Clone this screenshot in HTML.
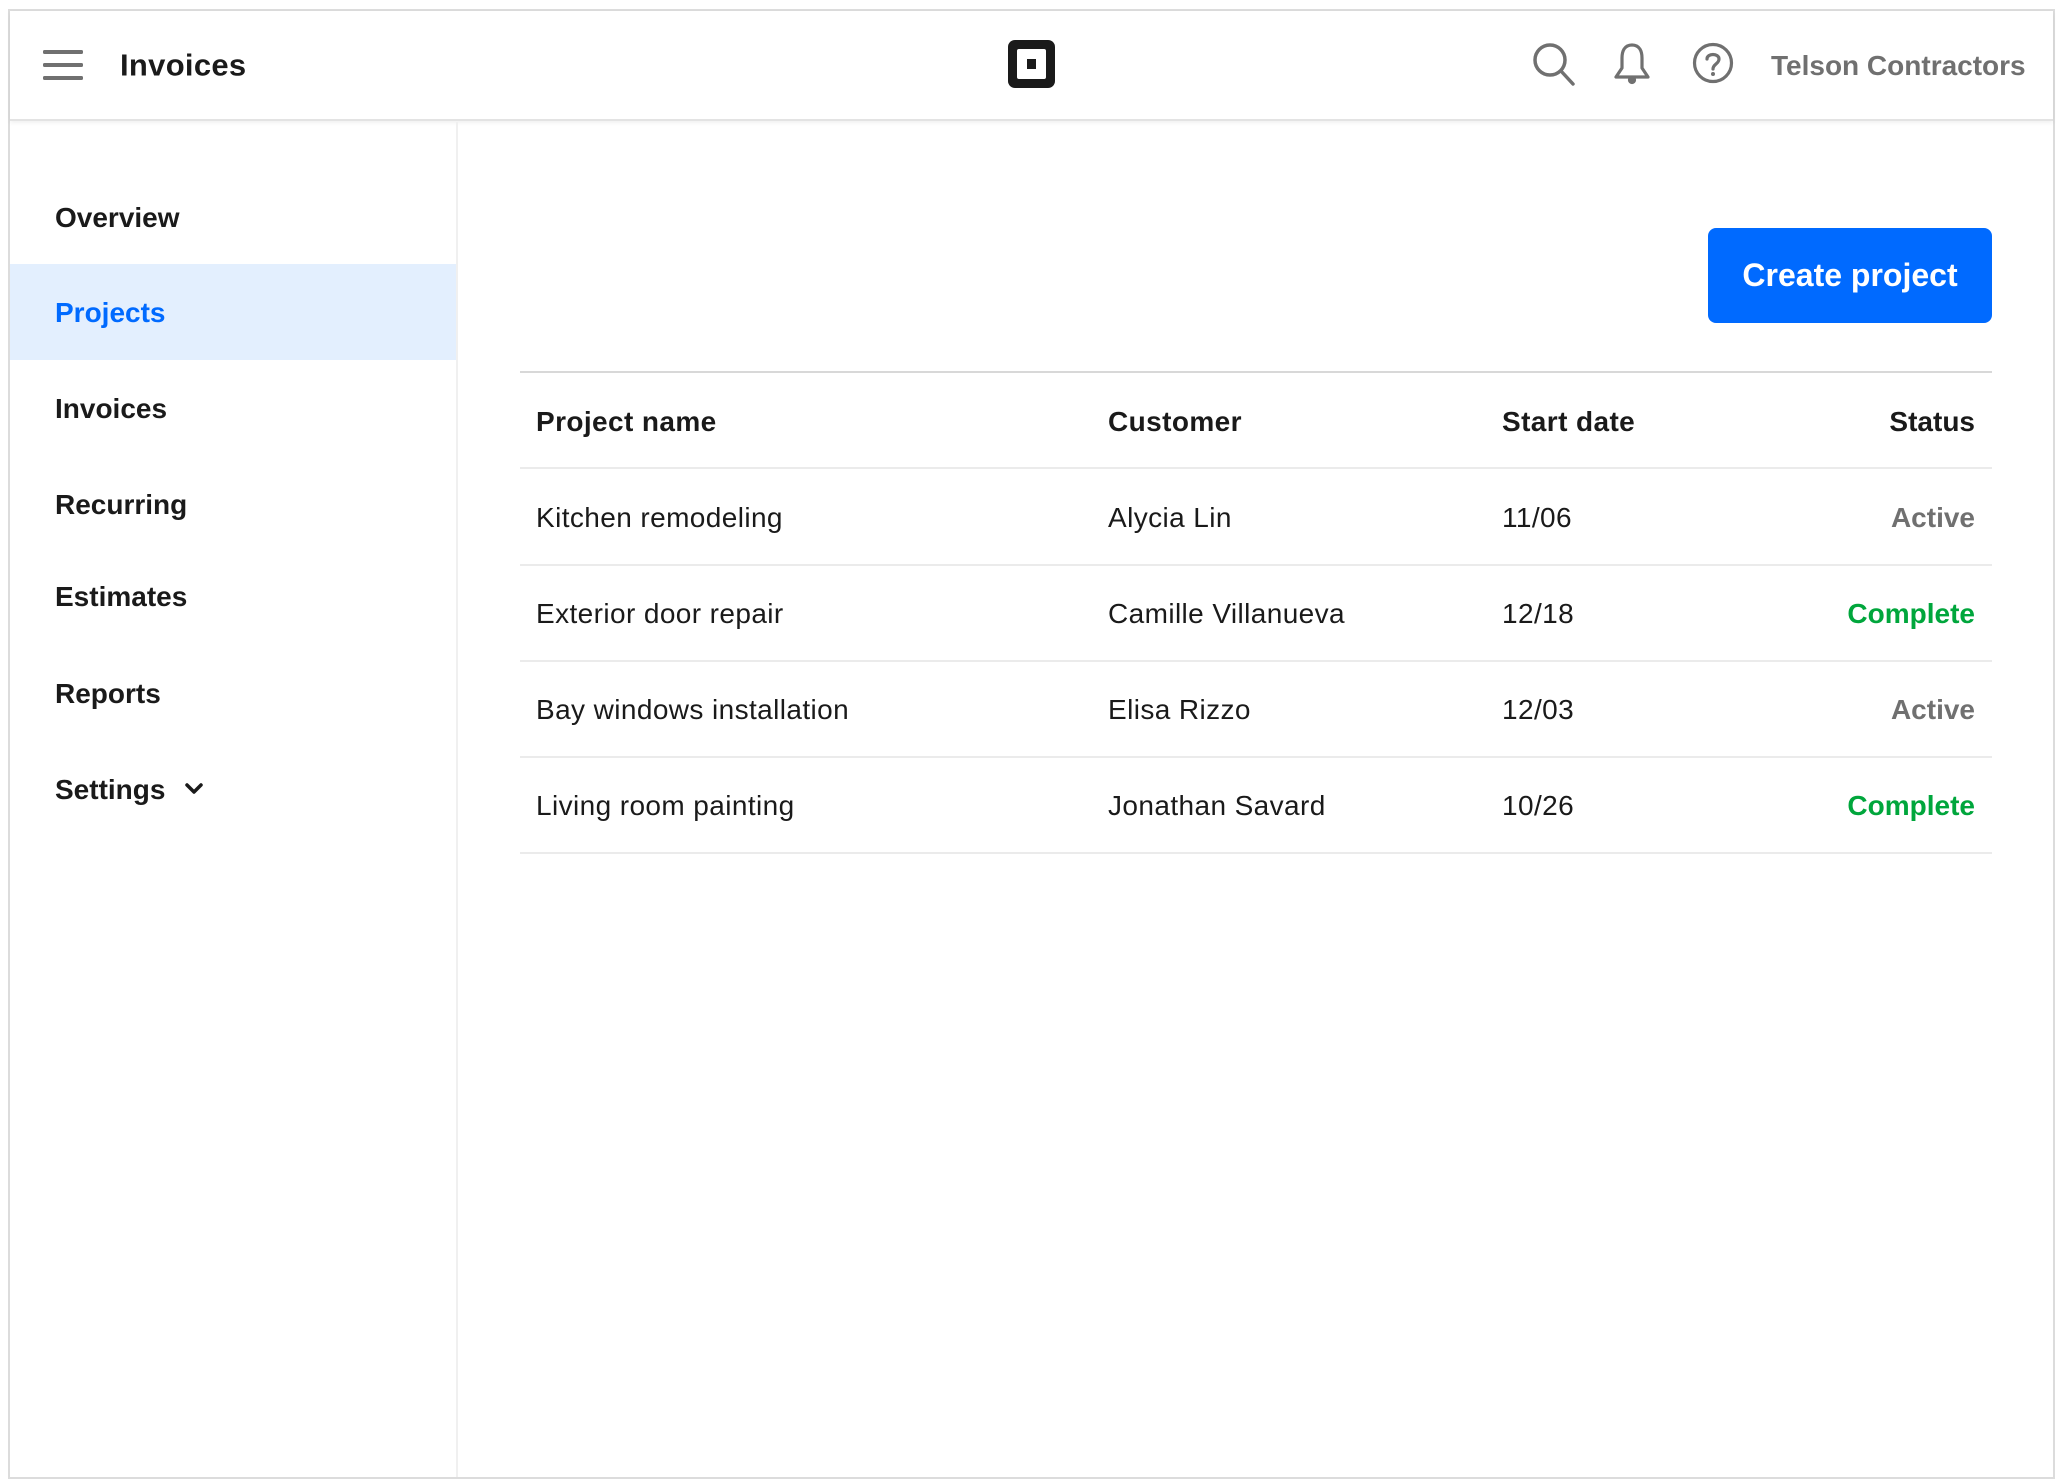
<!DOCTYPE html>
<html><head><meta charset="utf-8"><style>
*{margin:0;padding:0;box-sizing:border-box}
body{width:2064px;height:1480px;background:#fff;font-family:"Liberation Sans",sans-serif;position:relative;overflow:hidden;color:#1a1a1a}
.frame{position:absolute;left:8px;top:9px;width:2047px;height:1470px;border:2px solid #dcdcdc}
.hdr{position:absolute;left:10px;top:11px;width:2043px;height:110px;border-bottom:2px solid #e3e3e3;box-shadow:0 2px 4px rgba(0,0,0,.06)}
.side{position:absolute;left:456px;top:122px;width:2px;height:1355px;background:#f0f0f0}
.t{position:absolute;white-space:nowrap;line-height:1}
.nav{font-size:28px;font-weight:bold;left:55px;color:#1a1a1a;transform:translateY(-50%)}
.sel{position:absolute;left:10px;top:264px;width:446px;height:96px;background:#e3effe}
.line{position:absolute;left:520px;width:1472px;height:2px;background:#ebebeb}
.cell{font-size:28px;letter-spacing:0.4px;transform:translateY(-50%)}
.st{font-weight:bold;right:89px;letter-spacing:0}
.g{color:#00a63c}.a{color:#707070}
</style></head><body>
<div class="frame"></div>
<div class="hdr"></div>
<svg style="position:absolute;left:43px;top:50px" width="42" height="30"><g fill="#707070"><rect x="0" y="0" width="40" height="4" rx="1.5"/><rect x="0" y="13" width="40" height="4" rx="1.5"/><rect x="0" y="26" width="40" height="4" rx="1.5"/></g></svg>
<div class="t" style="left:120px;top:65px;font-size:31px;font-weight:bold;letter-spacing:0.3px;transform:translateY(-50%)">Invoices</div>
<svg style="position:absolute;left:1008px;top:40px" width="48" height="48"><rect x="0" y="0" width="47" height="48" rx="7" fill="#1a1a1a"/><rect x="9" y="9" width="29" height="30" rx="2" fill="#fff"/><rect x="19" y="19" width="9" height="10" fill="#1a1a1a"/></svg>
<svg style="position:absolute;left:1532px;top:42px" width="44" height="44" fill="none" stroke="#707070" stroke-width="3.5"><circle cx="18" cy="18" r="15"/><line x1="29" y1="29" x2="41" y2="42" stroke-linecap="round"/></svg>
<svg style="position:absolute;left:1612px;top:42px" width="44" height="44" fill="none" stroke="#707070" stroke-width="3.2" stroke-linejoin="round"><path d="M20 3 C12 3 10 10 10 16 V26 L4 35 H36 L30 26 V16 C30 10 28 3 20 3Z"/><circle cx="20" cy="38" r="2.5" fill="#707070"/></svg>
<svg style="position:absolute;left:1692px;top:42px" width="44" height="44" fill="none" stroke="#707070" stroke-width="3.2"><circle cx="21" cy="21" r="18.5"/><path d="M15 17 C15 11 27 11 27 17 C27 22 21 22 21 27" stroke-linecap="round"/><circle cx="21" cy="32" r="2" fill="#707070" stroke="none"/></svg>
<div class="t" style="left:1771px;top:66px;font-size:28px;font-weight:bold;color:#707070;transform:translateY(-50%)">Telson Contractors</div>
<div class="side"></div>
<div class="sel"></div>
<div class="t nav" style="top:218px">Overview</div>
<div class="t nav" style="top:313px;color:#006aff">Projects</div>
<div class="t nav" style="top:409px">Invoices</div>
<div class="t nav" style="top:505px">Recurring</div>
<div class="t nav" style="top:597px">Estimates</div>
<div class="t nav" style="top:694px">Reports</div>
<div class="t nav" style="top:790px">Settings</div>
<svg style="position:absolute;left:184px;top:782px" width="20" height="14" fill="none" stroke="#1a1a1a" stroke-width="3.5" stroke-linecap="round" stroke-linejoin="round"><path d="M3 3 L10 10 L17 3"/></svg>
<div style="position:absolute;left:1708px;top:228px;width:284px;height:95px;background:#006aff;border-radius:8px;color:#fff;font-size:32px;font-weight:bold;display:flex;align-items:center;justify-content:center">Create project</div>
<div class="line" style="top:371px;background:#d8d8d8"></div>
<div class="line" style="top:467px"></div>
<div class="line" style="top:564px"></div>
<div class="line" style="top:660px"></div>
<div class="line" style="top:756px"></div>
<div class="line" style="top:852px"></div>
<div class="t cell" style="left:536px;top:422px;font-weight:bold">Project name</div>
<div class="t cell" style="left:1108px;top:422px;font-weight:bold">Customer</div>
<div class="t cell" style="left:1502px;top:422px;font-weight:bold">Start date</div>
<div class="t cell st" style="top:422px">Status</div>

<div class="t cell" style="left:536px;top:518px">Kitchen remodeling</div>
<div class="t cell" style="left:1108px;top:518px">Alycia Lin</div>
<div class="t cell" style="left:1502px;top:518px">11/06</div>
<div class="t cell st a" style="top:518px">Active</div>

<div class="t cell" style="left:536px;top:614px">Exterior door repair</div>
<div class="t cell" style="left:1108px;top:614px">Camille Villanueva</div>
<div class="t cell" style="left:1502px;top:614px">12/18</div>
<div class="t cell st g" style="top:614px">Complete</div>

<div class="t cell" style="left:536px;top:710px">Bay windows installation</div>
<div class="t cell" style="left:1108px;top:710px">Elisa Rizzo</div>
<div class="t cell" style="left:1502px;top:710px">12/03</div>
<div class="t cell st a" style="top:710px">Active</div>

<div class="t cell" style="left:536px;top:806px">Living room painting</div>
<div class="t cell" style="left:1108px;top:806px">Jonathan Savard</div>
<div class="t cell" style="left:1502px;top:806px">10/26</div>
<div class="t cell st g" style="top:806px">Complete</div>
</body></html>
